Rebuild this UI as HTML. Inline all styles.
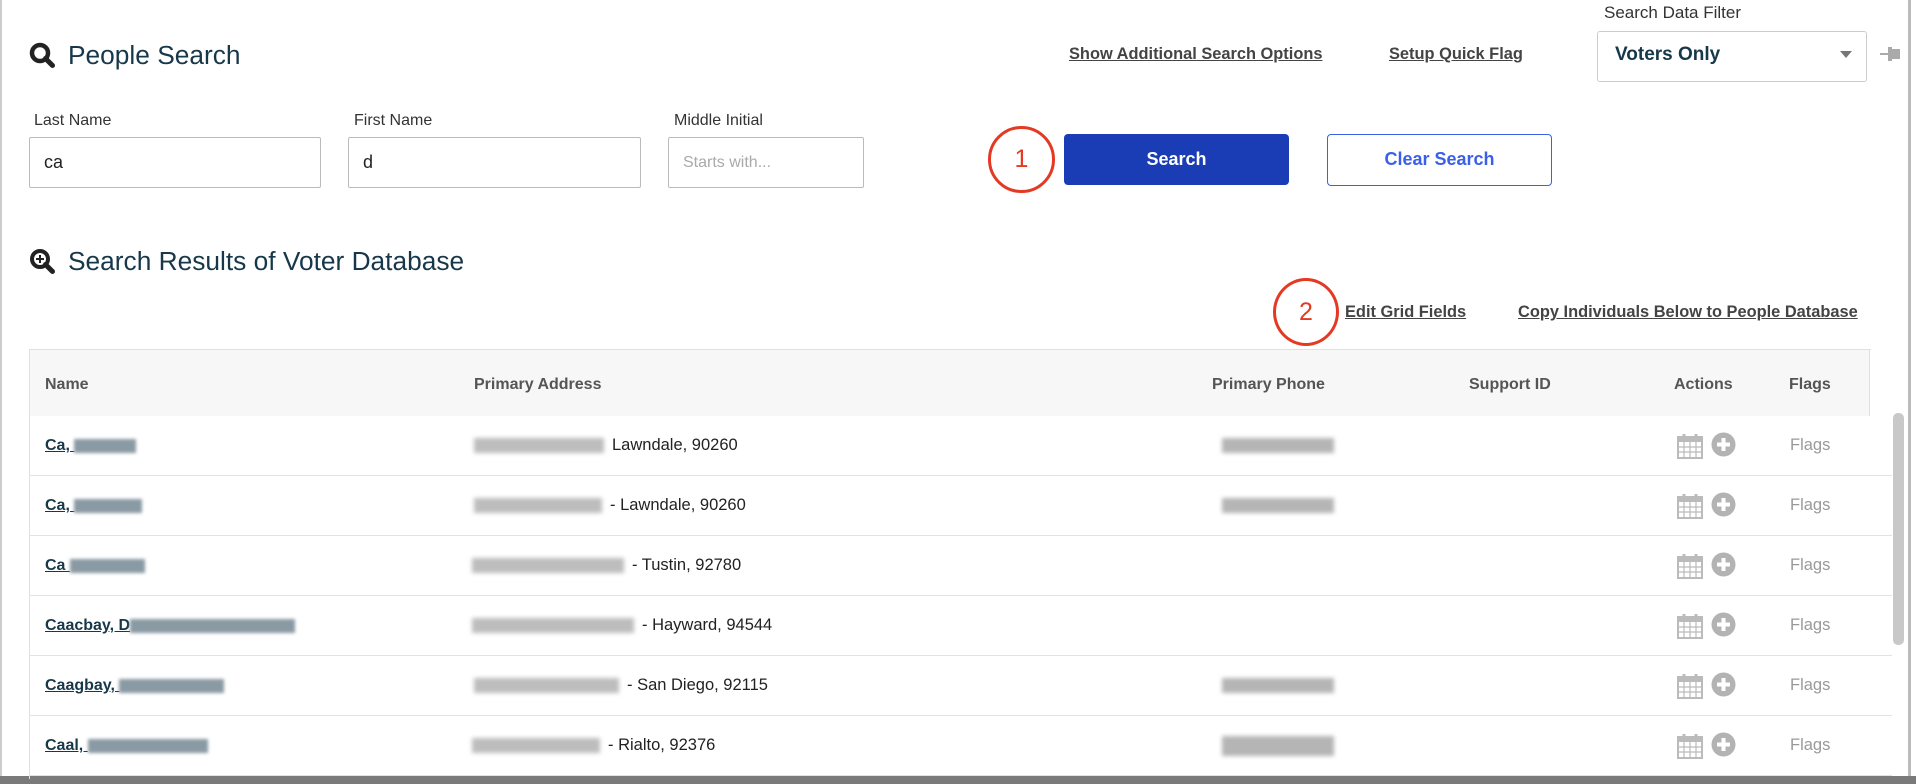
<!DOCTYPE html>
<html><head><meta charset="utf-8"><style>
*{margin:0;padding:0;box-sizing:border-box}
body{width:1916px;height:784px;overflow:hidden;background:#fff;font-family:"Liberation Sans",Arial,sans-serif;position:relative;color:#222}
.a{position:absolute;white-space:nowrap}
.title{font-size:26.3px;color:#17384a}
.lbl{font-size:16px;color:#333}
.inp{position:absolute;border:1px solid #bbb;border-radius:2px;height:51px;top:137px;font-size:18px;padding:0 14px;line-height:49px}
.lnk{font-size:16.4px;font-weight:bold;color:#444;text-decoration:underline}
.circ{position:absolute;border:3px solid #e43a24;border-radius:50%;color:#e43a24;font-size:25px;text-align:center}
.th{font-size:16px;font-weight:bold;color:#555;top:376px}
.row{position:absolute;left:30px;width:1862px;height:60px;border-bottom:1px solid #e2e2e2}
.nm{position:absolute;left:15px;top:21px;font-size:16px;font-weight:bold;color:#17384a;text-decoration:underline}
.blur{display:inline-block;height:14px;background:#8a9aa4;filter:blur(1.5px);vertical-align:middle}
.ad{position:absolute;top:20px;font-size:16.5px;color:#222}
.gb{display:inline-block;height:15px;background:#bdbdbd;filter:blur(2px);vertical-align:middle;margin-right:8px}
.ph{position:absolute;left:1192px;top:22px;width:112px;height:15px;background:#b5b5b5;filter:blur(2px)}
</style></head><body>
<div class="a" style="left:0;top:0;width:2px;height:784px;background:#ccc"></div>
<div class="a" style="left:1908px;top:0;width:3px;height:784px;background:#bbb"></div>
<div class="a" style="left:0;top:776px;width:1916px;height:8px;background:#7a7a7a"></div>

<svg class="a" style="left:29px;top:42px" width="27" height="26" viewBox="0 0 27 26"><circle cx="11" cy="11" r="8" fill="none" stroke="#222" stroke-width="4.5"/><line x1="16.5" y1="16.5" x2="23.5" y2="23.5" stroke="#222" stroke-width="5" stroke-linecap="round"/></svg>
<div class="a title" style="left:68px;top:40px">People Search</div>

<div class="a lbl" style="left:34px;top:112px">Last Name</div>
<div class="a lbl" style="left:354px;top:112px">First Name</div>
<div class="a lbl" style="left:674px;top:112px">Middle Initial</div>
<div class="inp" style="left:29px;width:292px">ca</div>
<div class="inp" style="left:348px;width:293px">d</div>
<div class="inp" style="left:668px;width:196px;color:#aaa;font-size:16px">Starts with...</div>

<div class="a lnk" style="left:1069px;top:45px">Show Additional Search Options</div>
<div class="a lnk" style="left:1389px;top:45px">Setup Quick Flag</div>
<div class="a lbl" style="left:1604px;top:3px;font-size:17px">Search Data Filter</div>
<div class="a" style="left:1597px;top:31px;width:270px;height:51px;border:1px solid #ccc;border-radius:3px"></div>
<div class="a" style="left:1615px;top:44px;font-size:19px;font-weight:bold;color:#17384a">Voters Only</div>
<div class="a" style="left:1840px;top:51px;width:0;height:0;border-left:6px solid transparent;border-right:6px solid transparent;border-top:7px solid #777"></div>
<svg class="a" style="left:1878px;top:44px" width="24" height="20" viewBox="0 0 24 20"><rect x="10" y="3" width="4" height="14" fill="#aaa"/><rect x="14" y="5" width="8" height="10" fill="#aaa"/><rect x="2" y="9" width="9" height="2" fill="#aaa"/></svg>

<div class="circ" style="left:988px;top:126px;width:67px;height:67px;line-height:61px">1</div>
<div class="a" style="left:1064px;top:134px;width:225px;height:51px;background:#1a3db6;border-radius:4px;color:#fff;font-weight:bold;font-size:18px;text-align:center;line-height:51px">Search</div>
<div class="a" style="left:1327px;top:134px;width:225px;height:52px;border:1.5px solid #3a62e8;border-radius:4px;color:#3a5fe8;font-weight:bold;font-size:18px;text-align:center;line-height:49px">Clear Search</div>

<svg class="a" style="left:29px;top:248px" width="27" height="26" viewBox="0 0 27 26"><circle cx="11" cy="11" r="8" fill="none" stroke="#222" stroke-width="4"/><line x1="16.5" y1="16.5" x2="23.5" y2="23.5" stroke="#222" stroke-width="5" stroke-linecap="round"/><path d="M11 7v8M7 11h8" stroke="#222" stroke-width="2"/></svg>
<div class="a title" style="left:68px;top:246px">Search Results of Voter Database</div>

<div class="circ" style="left:1273px;top:278px;width:66px;height:68px;line-height:62px">2</div>
<div class="a lnk" style="left:1345px;top:303px">Edit Grid Fields</div>
<div class="a lnk" style="left:1518px;top:303px">Copy Individuals Below to People Database</div>

<div class="a" style="left:29px;top:349px;width:1842px;height:430px;border-left:1px solid #e0e0e0;border-top:1px solid #e0e0e0"></div>
<div class="a" style="left:30px;top:350px;width:1840px;height:66px;background:#f7f7f7;border-right:1px solid #e0e0e0"></div>
<div class="a th" style="left:45px">Name</div>
<div class="a th" style="left:474px">Primary Address</div>
<div class="a th" style="left:1212px">Primary Phone</div>
<div class="a th" style="left:1469px">Support ID</div>
<div class="a th" style="left:1674px">Actions</div>
<div class="a th" style="left:1789px">Flags</div>

<div class="a" style="left:1893px;top:413px;width:11px;height:232px;background:#c8c8c8;border-radius:5px"></div>

<div class="row" style="top:416px"><div class="nm">Ca, <span class="blur" style="width:62px"></span></div><div class="ad" style="left:444px"><span class="gb" style="width:130px"></span>Lawndale, 90260</div><div class="ph"></div></div>
<div class="row" style="top:476px"><div class="nm">Ca, <span class="blur" style="width:68px"></span></div><div class="ad" style="left:444px"><span class="gb" style="width:128px"></span>- Lawndale, 90260</div><div class="ph"></div></div>
<div class="row" style="top:536px"><div class="nm">Ca <span class="blur" style="width:75px"></span></div><div class="ad" style="left:442px"><span class="gb" style="width:152px"></span>- Tustin, 92780</div></div>
<div class="row" style="top:596px"><div class="nm">Caacbay, D<span class="blur" style="width:165px"></span></div><div class="ad" style="left:442px"><span class="gb" style="width:162px"></span>- Hayward, 94544</div></div>
<div class="row" style="top:656px"><div class="nm">Caagbay, <span class="blur" style="width:105px"></span></div><div class="ad" style="left:444px"><span class="gb" style="width:145px"></span>- San Diego, 92115</div><div class="ph"></div></div>
<div class="row" style="top:716px"><div class="nm">Caal, <span class="blur" style="width:120px"></span></div><div class="ad" style="left:442px"><span class="gb" style="width:128px"></span>- Rialto, 92376</div><div class="ph" style="height:20px;top:20px"></div></div>

<div id="icons"></div>
<script>
var h='';for(var i=0;i<6;i++){var t=432+i*60;
h+='<svg class="a" style="left:1677px;top:'+t+'px" width="27" height="27" viewBox="0 0 27 27"><rect x="1" y="5" width="24" height="21" fill="none" stroke="#bbb" stroke-width="2"/><rect x="1" y="5" width="24" height="5" fill="#bbb"/><path d="M7 2v6M19 2v6" stroke="#bbb" stroke-width="3"/><path d="M7 10v16M13 10v16M19 10v16M1 15h24M1 20h24" stroke="#bbb" stroke-width="1.2"/></svg>';
h+='<svg class="a" style="left:1711px;top:'+t+'px" width="25" height="25" viewBox="0 0 25 25"><circle cx="12.5" cy="12.5" r="12" fill="#b3b3b3"/><path d="M12.5 6v13M6 12.5h13" stroke="#fff" stroke-width="4"/></svg>';
h+='<div class="a" style="left:1790px;top:'+(t+4)+'px;font-size:16.5px;color:#999">Flags</div>';}
document.getElementById('icons').innerHTML=h;
</script>
</body></html>
